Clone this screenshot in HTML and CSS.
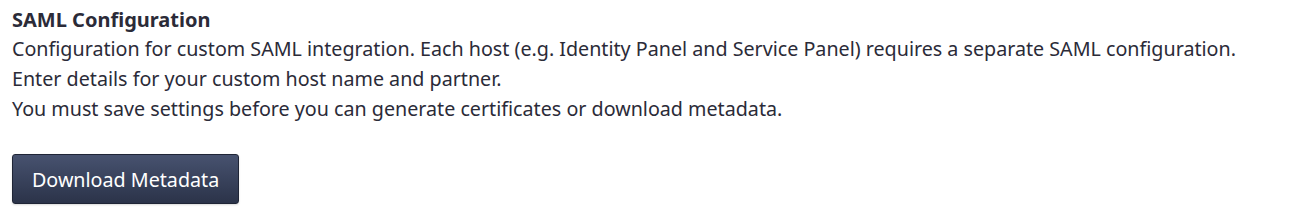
FILE: index.html
```html
<!DOCTYPE html>
<html>
<head>
	<title>SAML Configuration</title>
	<link rel="stylesheet" href="styles.css">
</head>
<body>
	<div class="saml">
		<h4>SAML Configuration</h4>
		<p>Configuration for custom SAML integration. Each host (e.g. Identity Panel and Service Panel) requires a separate SAML configuration.</p>
		<p>Enter details for your custom host name and partner.</p>
		<p>You must save settings before you can generate certificates or download metadata.</p>
		<div class="actions">
			<button class="btn">Download Metadata</button>
		</div>
	</div>
</body>
</html>
```
FILE: styles.css
```css
/* general */
		body {
			margin: 0;
			background: #fff;
			font-family: "Noto Sans", "Open Sans", sans-serif;
			color: #2b2b38;
		}
		.saml {
			padding: 5px 12px;
			font-size: 19.7px;
			line-height: 30px;
		}
		.saml h4 {
			margin: 0;
			font-size: 20px;
			font-weight: bold;
			line-height: 29px;
		}
		.saml p {
			margin: 0;
		}
/* button */
		.actions {
			padding-top: 30px;
		}
		.btn {
			font-family: inherit;
			font-size: 19.7px;
			color: #fff;
			height: 50px;
			padding: 0 19px;
			border: 1px solid #1f2536;
			border-radius: 3px;
			background: linear-gradient(#47526f, #2b3349);
			box-shadow: 0 1px 2px rgba(0, 0, 0, 0.15);
		}
```
